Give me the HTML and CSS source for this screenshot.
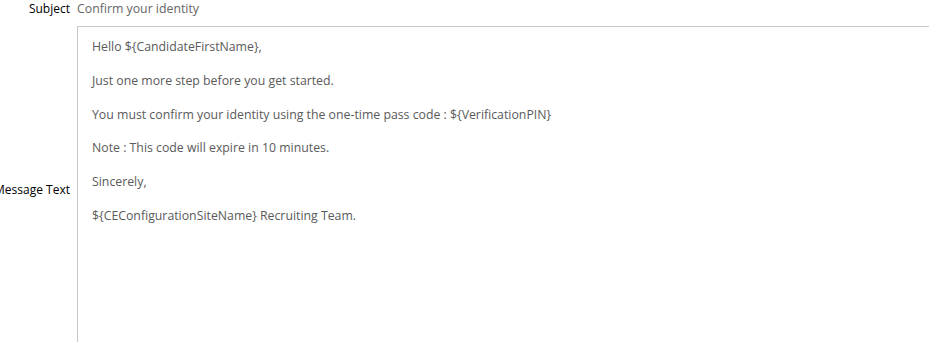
FILE: index.html
```html
<!DOCTYPE html>
<html>
<head>
<meta charset="utf-8">
<link rel="stylesheet" href="styles.css">
</head>
<body>
<div class="form">
  <div class="row subject-row">
    <div class="label">Subject</div>
    <div class="value">Confirm your identity</div>
  </div>
  <div class="row message-row">
    <div class="label label-mid">Message Text</div>
    <div class="editor">
      <p>Hello ${CandidateFirstName},</p>
      <p>Just one more step before you get started.</p>
      <p>You must confirm your identity using the one-time pass code : ${VerificationPIN}</p>
      <p>Note : This code will expire in 10 minutes.</p>
      <p>Sincerely,</p>
      <p>${CEConfigurationSiteName} Recruiting Team.</p>
    </div>
  </div>
</div>
</body>
</html>
```
FILE: styles.css
```css
html, body {
  margin: 0;
  padding: 0;
  background: #fff;
  overflow: hidden;
}
body {
  font-family: "Open Sans", "Noto Sans", sans-serif;
  font-size: 12px;
  color: #000;
}
.form {
  display: flex;
  flex-direction: column;
  gap: 9px;
}
.row {
  display: flex;
}
.label {
  width: 70px;
  flex: 0 0 70px;
  padding-right: 7px;
  text-align: right;
  white-space: nowrap;
  display: flex;
  justify-content: flex-end;
}
.subject-row {
  line-height: 17px;
}
.subject-row .value {
  color: #666;
  font-size: 12.3px;
}
.label-mid {
  align-items: center;
}
.editor {
  flex: 1;
  height: 304px;
  border: 1px solid #c8c8c8;
  border-right: none;
  padding: 12px 14px 8px;
  color: #5a5a5a;
  font-size: 12.3px;
}
.editor p {
  margin: 0 0 17.8px 0;
  line-height: 16px;
}
```
